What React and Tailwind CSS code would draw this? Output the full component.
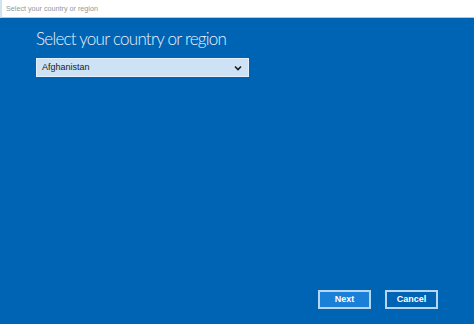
export default function App() {
  return (
    <div className="w-[474px] h-[324px] flex flex-col overflow-hidden" style={{ fontFamily: '"Open Sans", "Noto Sans", sans-serif' }}>
      <div className="h-[18px] bg-white border-b border-[#a8cdea] border-l-2 border-l-[#cfe3f3] flex items-center pl-[4px]">
        <span className="text-[7.2px] text-[#8e989f] leading-none" style={{ fontFamily: '"Liberation Sans", sans-serif' }}>Select your country or region</span>
      </div>
      <div className="flex-1 bg-[#0064b5] flex flex-col pl-[36px] pr-[36px]">
        <h1 className="mt-[9px] text-[17px] leading-[24px] font-light tracking-[-0.75px] text-[#e8f1fa]" style={{ fontFamily: 'Lato, sans-serif' }}>Select your country or region</h1>
        <div className="mt-[7px] w-[213px] h-[19px] bg-[#cde2f4] border border-[#e6f0fa] flex items-center justify-between pl-[5px] pr-[6px]">
          <span className="text-[9px] text-[#1a1a1a]" style={{ fontFamily: '"Liberation Sans", sans-serif' }}>Afghanistan</span>
          <svg width="8" height="6" viewBox="0 0 8 6" className="block">
            <path d="M1 1.5 L4 4.5 L7 1.5" fill="none" stroke="#1a1a1a" strokeWidth="1.6" />
          </svg>
        </div>
        <div className="flex-1" />
        <div className="flex justify-end gap-[14px] mb-[15px] mr-[0px]">
          <button className="w-[53px] h-[19px] bg-[#1a7fd6] border-2 border-[#b6d6f2] text-white text-[9px] font-bold flex items-center justify-center" style={{ fontFamily: '"Liberation Sans", sans-serif' }}>Next</button>
          <button className="w-[53px] h-[19px] bg-[#0064b5] border-2 border-[#b6d6f2] text-white text-[9px] font-bold flex items-center justify-center" style={{ fontFamily: '"Liberation Sans", sans-serif' }}>Cancel</button>
        </div>
      </div>
    </div>
  );
}
